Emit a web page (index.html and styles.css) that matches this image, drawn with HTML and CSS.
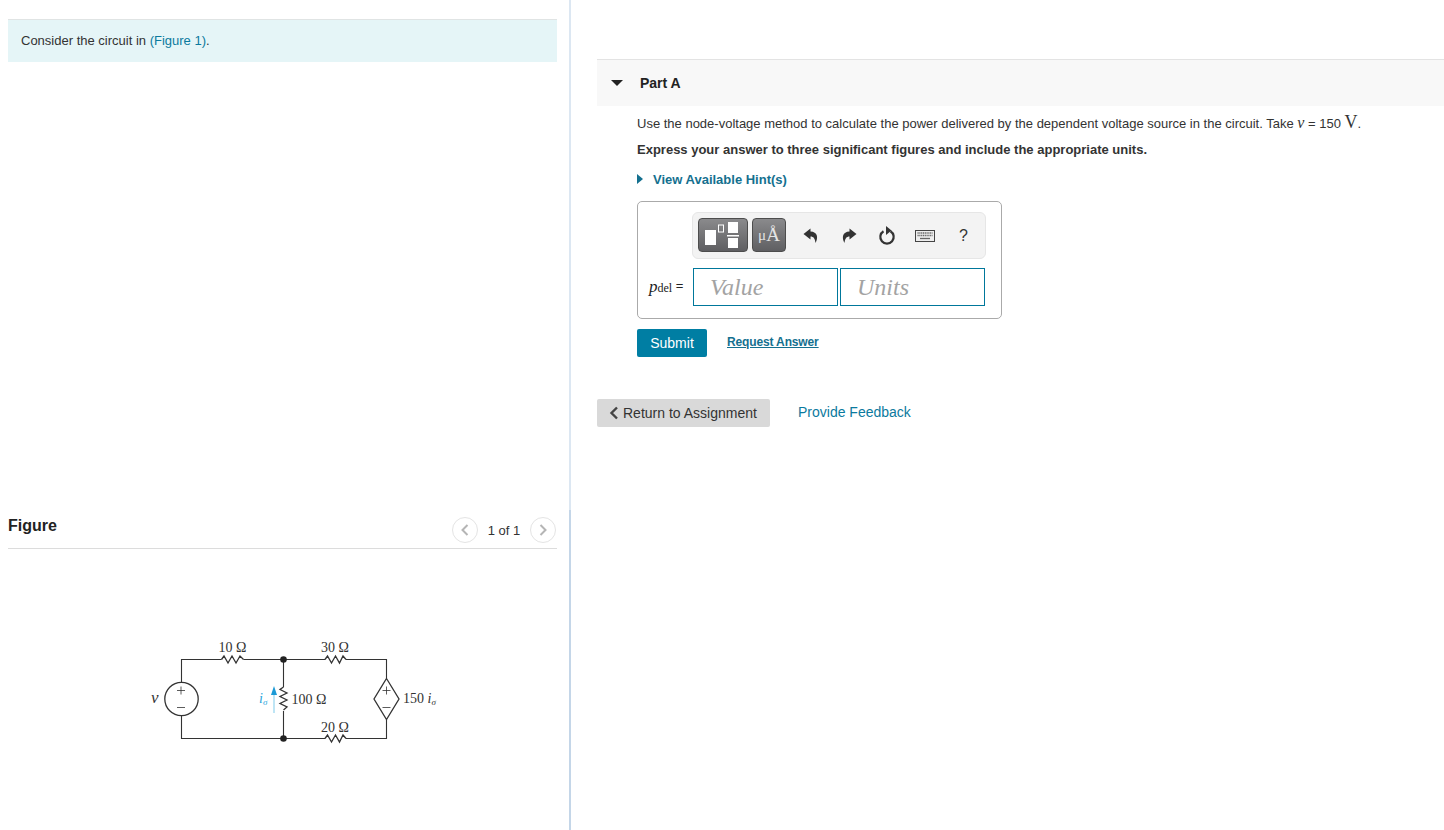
FILE: index.html
```html
<!DOCTYPE html>
<html lang="en">
<head>
<meta charset="utf-8">
<title>Part A</title>
<link rel="stylesheet" href="styles.css">
</head>
<body>
<div class="page">
  <aside class="left">
    <div class="intro">Consider the circuit in <a class="link" href="#">(Figure 1)</a>.</div>
    <div class="fig-head">
      <h2 class="fig-title">Figure</h2>
      <div class="pager">
        <span class="pager-btn"><svg width="10" height="14" viewBox="0 0 10 14"><path d="M7.5 2 L2.5 7 L7.5 12" fill="none" stroke="#b5b5b5" stroke-width="2"/></svg></span>
        <span class="pager-text">1 of 1</span>
        <span class="pager-btn"><svg width="10" height="14" viewBox="0 0 10 14"><path d="M2.5 2 L7.5 7 L2.5 12" fill="none" stroke="#b5b5b5" stroke-width="2"/></svg></span>
      </div>
    </div>
    <svg class="circuit" width="320" height="120" viewBox="0 0 320 120">
      <g fill="none" stroke="#333" stroke-width="1.1">
        <path d="M51.500 52.500V29.500H91.500M113.500 29.500H195M216 29.500H256.500V48M256.500 90V108.500H216M195 108.500H51.500V85.500"/>
        <path d="M153.500 29.500V57M153.500 81V108.500"/>
        <circle cx="51.500" cy="69" r="16.700" stroke-width="1.300"/>
        <path d="M256.500 48.500L269 69L256.500 89.500L244 69Z" stroke-width="1.300"/>
        <path d="M91.500 29.500L94 26L98 33L102 26L106 33L110 26L113.500 29.500" stroke-width="1.300"/>
        <path d="M195 29.500L197.500 26L201.500 33L205.500 26L209.500 33L213 26L216 29.500" stroke-width="1.300"/>
        <path d="M195 108.500L197.500 105L201.500 112L205.500 105L209.500 112L213 105L216 108.500" stroke-width="1.300"/>
        <path d="M153.500 57L150 59.500L157 63L150 66.500L157 70L150 73.500L157 77L153.500 80" stroke-width="1.300"/>
        <path d="M47 60.500H55M47 77.500H55M51 56.500V64.500M252.500 60.500H260.500M256.500 56.500V64.500M252.500 77.500H260.500" stroke-width=".8"/>
      </g>
      <circle cx="153.500" cy="29.500" r="3.300" fill="#222"/>
      <circle cx="153.500" cy="108.500" r="3.300" fill="#222"/>
      <path d="M144 63V83" stroke="#a9dcf2" stroke-width="1.500"/>
      <path d="M144 56L147 65H141Z" fill="#1c9ad6"/>
      <g class="cir-text">
        <text x="88.500" y="22">10 Ω</text>
        <text x="191" y="22">30 Ω</text>
        <text x="191" y="101.500">20 Ω</text>
        <text x="161.500" y="74">100 Ω</text>
        <text x="273" y="73">150 <tspan class="it">i</tspan><tspan class="sub" dy="2">σ</tspan></text>
        <text class="it big" x="21" y="73">v</text>
        <text class="it blue" x="129" y="73">i<tspan class="sub" dy="2">σ</tspan></text>
      </g>
    </svg>
  </aside>

  <main class="right">
    <div class="part-head">
      <span class="tri-down"></span>
      <span class="part-title">Part A</span>
    </div>
    <div class="part-body">
      <p class="q">Use the node-voltage method to calculate the power delivered by the dependent voltage source in the circuit. Take <i class="math">v</i> = 150 <span class="unit">V</span>.</p>
      <p class="q bold">Express your answer to three significant figures and include the appropriate units.</p>
      <a class="hint" href="#"><span class="tri-right"></span>View Available Hint(s)</a>

      <div class="answer">
        <div class="toolbar">
          <span class="tb-btn tb-wide">
            <svg width="38" height="28" viewBox="0 0 38 28">
              <rect x="1" y="9" width="11" height="15" fill="#fff"/>
              <rect x="14.500" y="4" width="5" height="7" fill="none" stroke="#fff"/>
              <rect x="24" y="1" width="10" height="11" fill="#fff"/>
              <rect x="23" y="14" width="12" height="1.500" fill="#fff"/>
              <rect x="24" y="17" width="10" height="10" fill="#fff"/>
            </svg>
          </span>
          <span class="tb-btn tb-unit"><span class="mu">μ</span>Å</span>
          <span class="tb-icons">
            <svg width="16" height="16" viewBox="0 0 16 16"><path d="M7.500 .5L0.500 6L7.500 11.500V8.500C10.500 8.500 12 10.500 12.500 15C15.500 9.500 14.500 3.800 7.500 3.500Z" fill="#333"/></svg>
            <svg width="16" height="16" viewBox="0 0 16 16"><path d="M8.500 .5L15.500 6L8.500 11.500V8.500C5.500 8.500 4 10.500 3.500 15C.5 9.500 1.500 3.800 8.500 3.500Z" fill="#333"/></svg>
            <svg width="18" height="20" viewBox="0 0 18 20"><path d="M5.500 5.200A6.700 6.700 0 1 0 12.500 5.200" fill="none" stroke="#333" stroke-width="2.200"/><path d="M8 0V9L13.500 4.500Z" fill="#333"/></svg>
            <svg width="20" height="12" viewBox="0 0 20 12"><rect x=".5" y=".5" width="19" height="11" fill="#eee" stroke="#444"/><path d="M2.500 3H17.500M2.500 5.500H17.500" stroke="#666" stroke-width="1.300" stroke-dasharray="1.200 .6"/><path d="M5 8.500H15" stroke="#666" stroke-width="1.300"/></svg>
            <span class="tb-help">?</span>
          </span>
        </div>
        <div class="input-row">
          <span class="var"><i class="var-p">p</i><span class="var-sub">del</span><span class="var-eq"> =</span></span>
          <span class="field">Value</span>
          <span class="field">Units</span>
        </div>
      </div>

      <div class="actions">
        <a class="submit" href="#">Submit</a>
        <a class="request" href="#">Request Answer</a>
      </div>
    </div>
    <div class="footer">
      <a class="return" href="#"><svg width="10" height="14" viewBox="0 0 10 14"><path d="M8 1.500L2.500 7L8 12.500" fill="none" stroke="#444" stroke-width="2.400"/></svg>Return to Assignment</a>
      <a class="feedback" href="#">Provide Feedback</a>
    </div>
  </main>
</div>
</body>
</html>
```
FILE: styles.css
```css
* { box-sizing: border-box; }
html, body { margin: 0; padding: 0; height: 100%; overflow: hidden; }
body { font-family: "Liberation Sans", Arial, sans-serif; font-size: 14px; color: #333; background: #fff; }
a { text-decoration: none; }

.page { display: flex; height: 830px; }

.left { position: relative; width: 571px; flex: none; padding: 19px 12px 0 8px; border-right: 2px solid #c4d6e8; }
.left::before { content: ""; position: absolute; right: -2px; top: 0; width: 2px; height: 510px; background: #dce7f2; }

.intro { height: 43px; padding: 12px 13px 0; background: #e5f5f7; border-top: 1px solid #e0e4e4; font-size: 13px; line-height: 18px; color: #333; }
.link { color: #0b7a9e; }

.fig-head { display: flex; justify-content: space-between; align-items: center; height: 33px; margin-top: 454px; border-bottom: 1px solid #dcdcdc; padding-bottom: 4px; }
.fig-title { margin: 0; font-size: 16px; font-weight: bold; color: #222; position: relative; top: -4px; }
.pager { display: flex; align-items: center; margin-right: 1px; }
.pager-btn { display: flex; align-items: center; justify-content: center; width: 26px; height: 26px; border: 1px solid #e4e4e4; border-radius: 50%; }
.pager-text { width: 52px; text-align: center; font-size: 13px; color: #333; }

.circuit { display: block; margin: 81px 0 0 122px; }
.cir-text { font-family: "Liberation Serif", serif; font-size: 14px; fill: #333; }
.it { font-style: italic; }
.big { font-size: 17px; }
.sub { font-size: 9px; font-style: italic; }
.blue { fill: #2aa5dc; }

.right { flex: 1; padding: 59px 0 0 26px; min-width: 0; }
.part-head { display: flex; align-items: center; height: 47px; background: #f8f8f8; border-top: 1px solid #e3e3e3; }
.tri-down { width: 0; height: 0; margin-left: 14px; border-left: 6px solid transparent; border-right: 6px solid transparent; border-top: 6px solid #222; }
.part-title { margin-left: 17px; font-size: 14px; font-weight: bold; color: #222; }

.part-body { padding-left: 40px; }
.q { margin: 0; font-size: 13px; line-height: 18px; color: #333; }
.part-body .q:first-child { margin-top: 7px; }
.bold { margin-top: 8px; font-weight: bold; }
.math { font-family: "Liberation Serif", serif; font-size: 16px; }
.unit { font-family: "Liberation Serif", serif; font-size: 18px; }

.hint { display: flex; align-items: center; margin-top: 11px; height: 18px; font-size: 13px; font-weight: bold; color: #14708f; }
.tri-right { width: 0; height: 0; margin-right: 10px; border-top: 5.500px solid transparent; border-bottom: 5.500px solid transparent; border-left: 6px solid #14708f; }

.answer { width: 365px; height: 118px; margin-top: 13px; padding: 10px 10px 0 10px; border: 1px solid #aaa; border-radius: 5px; }
.toolbar { display: flex; align-items: center; width: 294px; height: 47px; margin-left: 44px; padding-left: 5px; background: #f3f3f3; border: 1px solid #e6e6e6; border-radius: 6px; }
.tb-btn { display: flex; align-items: center; justify-content: center; height: 34px; margin-bottom: 2px; background: linear-gradient(#8a8a8c, #5f5f62); border: 1px solid #4d4d4d; border-radius: 4px; color: #fff; }
.tb-wide { width: 50px; }
.tb-unit { width: 34px; margin-left: 4px; font-family: "Liberation Serif", serif; font-size: 19px; color: #e4e4e4; }
.mu { font-size: 15px; align-self: flex-end; margin-bottom: 7px; }
.tb-icons { display: flex; align-items: center; gap: 0; margin-left: 17px; }
.tb-icons svg:nth-child(2) { margin-left: 22px; }
.tb-icons svg:nth-child(3) { margin-left: 21px; }
.tb-icons svg:nth-child(4) { margin-left: 19px; }
.tb-help { margin-left: 24px; font-size: 16px; color: #333; }

.input-row { display: flex; align-items: center; margin-top: 9px; }
.var { flex: none; width: 45px; padding-left: 1px; font-family: "Liberation Serif", serif; white-space: pre; color: #222; }
.var-p { font-size: 17px; }
.var-sub { font-size: 12px; }
.var-eq { font-family: "Liberation Sans", sans-serif; font-size: 13px; position: relative; top: -2px; }
.field { display: block; flex: none; width: 145px; height: 38px; margin-right: 2px; padding-left: 16px; border: 1px solid #00779b; font-family: "Liberation Serif", serif; font-style: italic; font-size: 24px; line-height: 36px; color: #a3a3a3; }

.actions { display: flex; align-items: center; margin-top: 10px; }
.submit { display: flex; align-items: center; justify-content: center; width: 70px; height: 28px; background: #007ea3; border-radius: 2px; font-size: 14px; color: #fff; }
.request { margin-left: 20px; font-size: 12px; font-weight: bold; letter-spacing: -.14px; color: #14708f; text-decoration: underline; position: relative; top: -1px; }

.footer { display: flex; align-items: center; margin-top: 42px; }
.return { display: flex; align-items: center; gap: 4px; width: 173px; height: 28px; padding-left: 12px; background: #d9d9d9; border-radius: 2px; font-size: 14px; color: #333; }
.feedback { margin-left: 28px; font-size: 14px; color: #0b7a9e; position: relative; top: -1px; }
```
